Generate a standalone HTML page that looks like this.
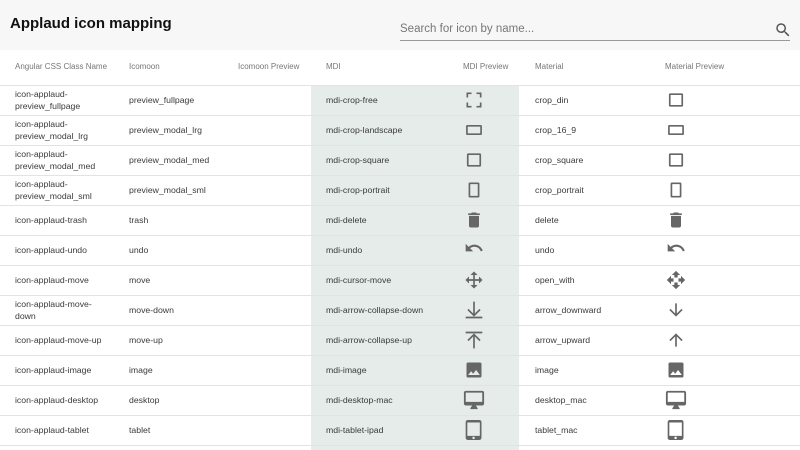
<!DOCTYPE html>
<html><head><meta charset="utf-8"><style>
*{margin:0;padding:0;box-sizing:border-box}
body{width:800px;height:450px;overflow:hidden;background:#fff;font-family:"Liberation Sans",Arial,sans-serif;color:#333;position:relative}
.hdr{position:absolute;left:0;top:0;width:800px;height:50px;background:#f7f7f7}
.title{position:absolute;left:10px;top:15px;font-size:15px;font-weight:bold;color:#111}
.search{position:absolute;left:400px;top:23px;font-size:11.5px;color:#777}
.sline{position:absolute;left:400px;top:40px;width:390px;height:1px;background:#999}
.shade{position:absolute;left:311px;top:85px;width:208px;height:365px;background:#e5ecea}
.t{position:absolute;font-size:8.7px;line-height:12px;color:#3a3a3a;white-space:nowrap}
.h{position:absolute;top:62px;font-size:8px;color:#777}
.line{position:absolute;left:0;width:800px;height:1px;background:#e3e3e3}
svg.i{position:absolute;width:20px;height:20px;fill:#666}
</style></head><body>
<div class="hdr"></div>
<div class="title">Applaud icon mapping</div>
<div class="search">Search for icon by name...</div>
<div class="sline"></div>
<svg style="position:absolute;left:774px;top:21px;width:18px;height:18px" viewBox="0 0 24 24"><path fill="#555" d="M15.5 14h-.79l-.28-.27A6.47 6.47 0 0 0 16 9.5 6.5 6.5 0 1 0 9.5 16c1.61 0 3.09-.59 4.230-1.57l.27.28v.79l5 4.99L20.49 19l-4.99-5zm-6 0C7.01 14 5 11.99 5 9.5S7.01 5 9.5 5 14 7.01 14 9.5 11.99 14 9.5 14z"/></svg>
<div class="shade"></div>
<div class="h" style="left:15px">Angular CSS Class Name</div>
<div class="h" style="left:129px">Icomoon</div>
<div class="h" style="left:238px">Icomoon Preview</div>
<div class="h" style="left:326px">MDI</div>
<div class="h" style="left:463px">MDI Preview</div>
<div class="h" style="left:535px">Material</div>
<div class="h" style="left:665px">Material Preview</div>
<svg width="0" height="0" style="position:absolute"><defs>
<path id="cropfree" d="M3 3h6v2H5v4H3zM15 3h6v6h-2V5h-4zM3 15h2v4h4v2H3zM19 15h2v6h-6v-2h4z"/>
<path id="sq" d="M5 4h14a1.5 1.5 0 0 1 1.5 1.5v13A1.5 1.5 0 0 1 19 20H5a1.5 1.5 0 0 1-1.5-1.5v-13A1.5 1.5 0 0 1 5 4zm.5 2v12h13V6z" fill-rule="evenodd"/>
<path id="land" d="M4 6h16a1.5 1.5 0 0 1 1.5 1.5v9A1.5 1.5 0 0 1 20 18H4a1.5 1.5 0 0 1-1.5-1.5v-9A1.5 1.5 0 0 1 4 6zm.5 2v8h15V8z" fill-rule="evenodd"/>
<path id="sqs" d="M5 4h14a1.5 1.5 0 0 1 1.5 1.5v13A1.5 1.5 0 0 1 19 20H5a1.5 1.5 0 0 1-1.5-1.5v-13A1.5 1.5 0 0 1 5 4zm.5 2v12h13V6z" fill-rule="evenodd"/>
<path id="port" d="M7 3h10a1.5 1.5 0 0 1 1.5 1.5v15A1.5 1.5 0 0 1 17 21H7a1.5 1.5 0 0 1-1.5-1.5v-15A1.5 1.5 0 0 1 7 3zm.5 2v14h9V5z" fill-rule="evenodd"/>
<path id="del" d="M6 19c0 1.1.9 2 2 2h8c1.1 0 2-.9 2-2V7H6v12zM19 4h-3.5l-1-1h-5l-1 1H5v2h14V4z"/>
<path id="undo" d="M12.5 8c-2.65 0-5.05.99-6.9 2.6L2 7v9h9l-3.62-3.62c1.390-1.16 3.16-1.88 5.12-1.88 3.54 0 6.55 2.31 7.6 5.5l2.37-.78C21.08 11.03 17.15 8 12.5 8z"/>
<path id="cmove" d="M13,6V11H18V7.75L22.25,12L18,16.25V13H13V18H16.25L12,22.25L7.75,18H11V13H6V16.25L1.75,12L6,7.75V11H11V6H7.75L12,1.75L16.25,6H13Z"/>
<path id="openw" d="M10 9h4V6h3l-5-5-5 5h3v3zm-1 1H6V7l-5 5 5 5v-3h3v-4zm14 2l-5-5v3h-3v4h3v3l5-5zm-9 3h-4v3H7l5 5 5-5h-3v-3z"/>
<path id="cdown" d="M19.92,12.08L12,20L4.08,12.08L5.5,10.67L11,16.17V2H13V16.17L18.5,10.66L19.92,12.08M12,20H2V22H22V20H12Z"/>
<path id="cup" d="M4.08,11.92L12,4L19.92,11.92L18.5,13.33L13,7.83V22H11V7.83L5.5,13.33L4.08,11.92M12,4H22V2H2V4H12Z"/>
<path id="adown" d="M20 12l-1.41-1.41L13 16.17V4h-2v12.17l-5.58-5.59L4 12l8 8 8-8z"/>
<path id="aup" d="M4 12l1.41 1.41L11 7.83V20h2V7.83l5.58 5.59L20 12l-8-8-8 8z"/>
<path id="img" fill-rule="evenodd" d="M5 3h14a2 2 0 0 1 2 2v14a2 2 0 0 1-2 2H5a2 2 0 0 1-2-2V5a2 2 0 0 1 2-2zM8.5 13.5L5 18h14l-4.5-6-3.5 4.5z"/>
<path id="desk" d="M21 2H3c-1.1 0-2 .9-2 2v12c0 1.1.9 2 2 2h7l-2 3v1h8v-1l-2-3h7c1.1 0 2-.9 2-2V4c0-1.1-.9-2-2-2zm0 12H3V4h18v10z"/>
<path id="tab" d="M18.5 0h-14C3.12 0 2 1.12 2 2.5v19C2 22.88 3.12 24 4.5 24h14c1.38 0 2.5-1.12 2.5-2.5v-19C21 1.12 19.88 0 18.5 0zm-7 23c-.83 0-1.5-.67-1.5-1.5s.67-1.5 1.5-1.5 1.5.67 1.5 1.5-.67 1.5-1.5 1.5zm7.5-4H4V3h15v16z"/>
</defs></svg>

<div class="line" style="top:85px"></div>
<div class="t" style="left:15px;top:88px">icon-applaud-<br>preview_fullpage</div><div class="t" style="left:129px;top:94px">preview_fullpage</div><div class="t" style="left:326px;top:94px">mdi-crop-free</div><div class="t" style="left:535px;top:94px">crop_din</div>
<svg class="i" style="left:464px;top:90px" viewBox="0 0 24 24"><use href="#cropfree"/></svg><svg class="i" style="left:666px;top:90px" viewBox="0 0 24 24"><use href="#sq"/></svg>
<div class="line" style="top:115px"></div>
<div class="t" style="left:15px;top:118px">icon-applaud-<br>preview_modal_lrg</div><div class="t" style="left:129px;top:124px">preview_modal_lrg</div><div class="t" style="left:326px;top:124px">mdi-crop-landscape</div><div class="t" style="left:535px;top:124px">crop_16_9</div>
<svg class="i" style="left:464px;top:120px" viewBox="0 0 24 24"><use href="#land"/></svg><svg class="i" style="left:666px;top:120px" viewBox="0 0 24 24"><use href="#land"/></svg>
<div class="line" style="top:145px"></div>
<div class="t" style="left:15px;top:148px">icon-applaud-<br>preview_modal_med</div><div class="t" style="left:129px;top:154px">preview_modal_med</div><div class="t" style="left:326px;top:154px">mdi-crop-square</div><div class="t" style="left:535px;top:154px">crop_square</div>
<svg class="i" style="left:464px;top:150px" viewBox="0 0 24 24"><use href="#sqs"/></svg><svg class="i" style="left:666px;top:150px" viewBox="0 0 24 24"><use href="#sqs"/></svg>
<div class="line" style="top:175px"></div>
<div class="t" style="left:15px;top:178px">icon-applaud-<br>preview_modal_sml</div><div class="t" style="left:129px;top:184px">preview_modal_sml</div><div class="t" style="left:326px;top:184px">mdi-crop-portrait</div><div class="t" style="left:535px;top:184px">crop_portrait</div>
<svg class="i" style="left:464px;top:180px" viewBox="0 0 24 24"><use href="#port"/></svg><svg class="i" style="left:666px;top:180px" viewBox="0 0 24 24"><use href="#port"/></svg>
<div class="line" style="top:205px"></div>
<div class="t" style="left:15px;top:214px">icon-applaud-trash</div><div class="t" style="left:129px;top:214px">trash</div><div class="t" style="left:326px;top:214px">mdi-delete</div><div class="t" style="left:535px;top:214px">delete</div>
<svg class="i" style="left:464px;top:210px" viewBox="0 0 24 24"><use href="#del"/></svg><svg class="i" style="left:666px;top:210px" viewBox="0 0 24 24"><use href="#del"/></svg>
<div class="line" style="top:235px"></div>
<div class="t" style="left:15px;top:244px">icon-applaud-undo</div><div class="t" style="left:129px;top:244px">undo</div><div class="t" style="left:326px;top:244px">mdi-undo</div><div class="t" style="left:535px;top:244px">undo</div>
<svg class="i" style="left:464px;top:238px" viewBox="0 0 24 24"><use href="#undo"/></svg><svg class="i" style="left:666px;top:238px" viewBox="0 0 24 24"><use href="#undo"/></svg>
<div class="line" style="top:265px"></div>
<div class="t" style="left:15px;top:274px">icon-applaud-move</div><div class="t" style="left:129px;top:274px">move</div><div class="t" style="left:326px;top:274px">mdi-cursor-move</div><div class="t" style="left:535px;top:274px">open_with</div>
<svg class="i" style="left:464px;top:270px" viewBox="0 0 24 24"><use href="#cmove"/></svg><svg class="i" style="left:666px;top:270px" viewBox="0 0 24 24"><use href="#openw"/></svg>
<div class="line" style="top:295px"></div>
<div class="t" style="left:15px;top:298px">icon-applaud-move-<br>down</div><div class="t" style="left:129px;top:304px">move-down</div><div class="t" style="left:326px;top:304px">mdi-arrow-collapse-down</div><div class="t" style="left:535px;top:304px">arrow_downward</div>
<svg class="i" style="left:464px;top:300px" viewBox="0 0 24 24"><use href="#cdown"/></svg><svg class="i" style="left:666px;top:300px" viewBox="0 0 24 24"><use href="#adown"/></svg>
<div class="line" style="top:325px"></div>
<div class="t" style="left:15px;top:334px">icon-applaud-move-up</div><div class="t" style="left:129px;top:334px">move-up</div><div class="t" style="left:326px;top:334px">mdi-arrow-collapse-up</div><div class="t" style="left:535px;top:334px">arrow_upward</div>
<svg class="i" style="left:464px;top:330px" viewBox="0 0 24 24"><use href="#cup"/></svg><svg class="i" style="left:666px;top:330px" viewBox="0 0 24 24"><use href="#aup"/></svg>
<div class="line" style="top:355px"></div>
<div class="t" style="left:15px;top:364px">icon-applaud-image</div><div class="t" style="left:129px;top:364px">image</div><div class="t" style="left:326px;top:364px">mdi-image</div><div class="t" style="left:535px;top:364px">image</div>
<svg class="i" style="left:464px;top:360px" viewBox="0 0 24 24"><use href="#img"/></svg><svg class="i" style="left:666px;top:360px" viewBox="0 0 24 24"><use href="#img"/></svg>
<div class="line" style="top:385px"></div>
<div class="t" style="left:15px;top:394px">icon-applaud-desktop</div><div class="t" style="left:129px;top:394px">desktop</div><div class="t" style="left:326px;top:394px">mdi-desktop-mac</div><div class="t" style="left:535px;top:394px">desktop_mac</div>
<svg class="i" style="left:463px;top:389px;width:22px;height:22px" viewBox="0 0 24 24"><use href="#desk"/></svg><svg class="i" style="left:665px;top:389px;width:22px;height:22px" viewBox="0 0 24 24"><use href="#desk"/></svg>
<div class="line" style="top:415px"></div>
<div class="t" style="left:15px;top:424px">icon-applaud-tablet</div><div class="t" style="left:129px;top:424px">tablet</div><div class="t" style="left:326px;top:424px">mdi-tablet-ipad</div><div class="t" style="left:535px;top:424px">tablet_mac</div>
<svg class="i" style="left:464px;top:419px;height:22px" viewBox="0 0 24 24"><use href="#tab"/></svg><svg class="i" style="left:666px;top:419px;height:22px" viewBox="0 0 24 24"><use href="#tab"/></svg>
<div class="line" style="top:445px"></div>
</body></html>
